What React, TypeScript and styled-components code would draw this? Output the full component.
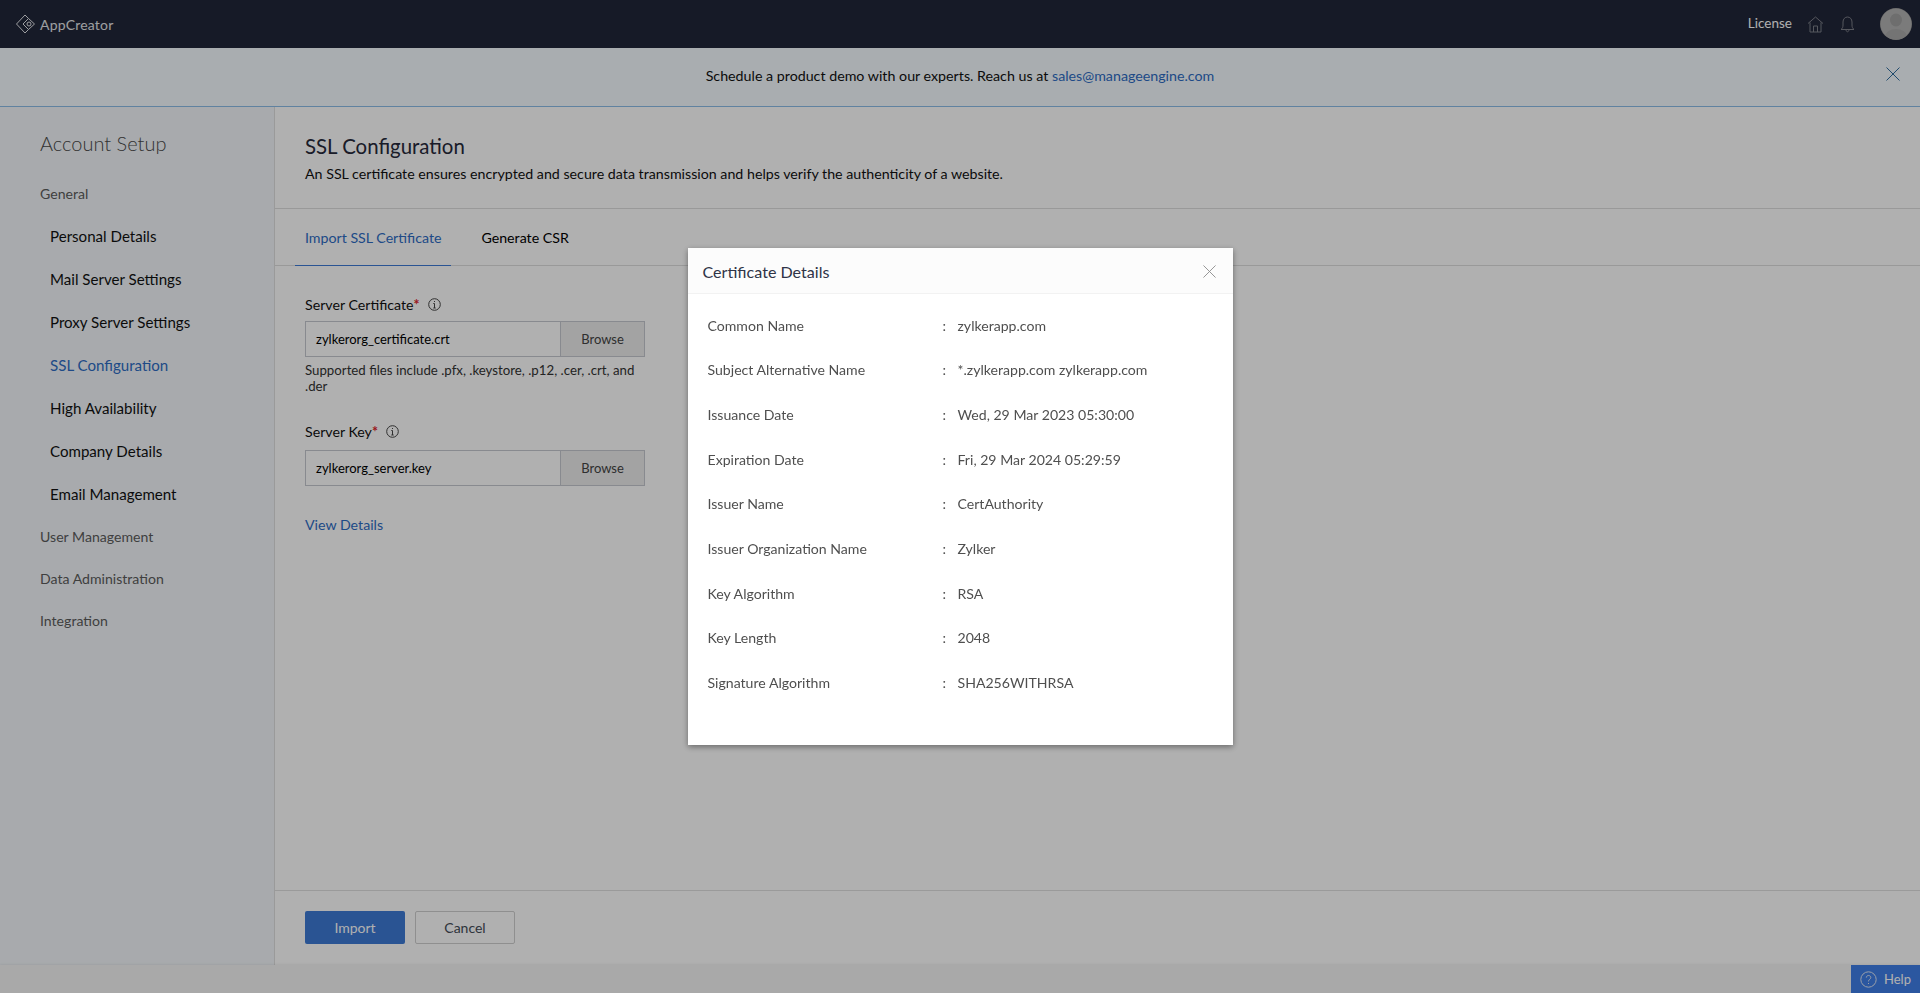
import { styled, createGlobalStyle } from 'styled-components';

const MENU_ITEMS = [
  'Personal Details',
  'Mail Server Settings',
  'Proxy Server Settings',
  'SSL Configuration',
  'High Availability',
  'Company Details',
  'Email Management',
];

const MENU_GROUPS = ['User Management', 'Data Administration', 'Integration'];

const CERT_DETAILS = [
  ['Common Name', 'zylkerapp.com'],
  ['Subject Alternative Name', '*.zylkerapp.com zylkerapp.com'],
  ['Issuance Date', 'Wed, 29 Mar 2023 05:30:00'],
  ['Expiration Date', 'Fri, 29 Mar 2024 05:29:59'],
  ['Issuer Name', 'CertAuthority'],
  ['Issuer Organization Name', 'Zylker'],
  ['Key Algorithm', 'RSA'],
  ['Key Length', '2048'],
  ['Signature Algorithm', 'SHA256WITHRSA'],
];

const GlobalStyle = createGlobalStyle`
  html, body {
    margin: 0;
    padding: 0;
    overflow: hidden;
    font-family: 'Lato', 'Liberation Sans', sans-serif;
  }

  * {
    box-sizing: border-box;
  }
`;

const LogoIcon = () => (
  <svg width="21" height="20" viewBox="0 0 21 20" fill="none" stroke="#e4e6ea" strokeWidth="1">
    <path d="M10 1 L1.5 10 L10 19 L13.5 15.5 L8 10 L13.5 4.5 Z" />
    <path d="M13.5 4.5 L19.5 10 L13.5 15.5" />
    <circle cx="14" cy="10" r="2" />
  </svg>
);

const HomeIcon = () => (
  <svg width="17" height="17" viewBox="0 0 17 17" fill="none" stroke="#7d8089" strokeWidth="1">
    <path d="M1 7.5 L8.5 1 L16 7.5" />
    <path d="M3 6.5 V16 H14 V6.5" />
    <path d="M6.5 16 V10 H10.5 V16" />
  </svg>
);

const BellIcon = () => (
  <svg width="15" height="17" viewBox="0 0 15 17" fill="none" stroke="#7d8089" strokeWidth="1">
    <path d="M1 13.5 C2.5 12.5 3 11 3 9 V6 C3 3 5 1 7.5 1 C10 1 12 3 12 6 V9 C12 11 12.5 12.5 14 13.5 Z" />
    <path d="M6 13.5 C6 16.5 9 16.5 9 13.5" />
  </svg>
);

const CloseIcon = ({ size, color }: { size: number; color: string }) => (
  <svg width={size} height={size} viewBox="0 0 14 14" fill="none" stroke={color} strokeWidth="1">
    <path d="M0.5 0.5 L13.5 13.5 M13.5 0.5 L0.5 13.5" />
  </svg>
);

const InfoIcon = () => (
  <svg width="13" height="13" viewBox="0 0 13 13" fill="none" stroke="#444" strokeWidth="1">
    <circle cx="6.5" cy="6.5" r="5.8" />
    <path d="M6.5 5.5 V10 M5.3 5.5 H6.5 M5.3 10 H7.7" />
    <path d="M6.5 3 V4" />
  </svg>
);

const HelpIcon = () => (
  <svg width="17" height="17" viewBox="0 0 17 17" fill="none" stroke="#dfe6f5" strokeWidth="1">
    <circle cx="8.5" cy="8.5" r="7.7" />
    <path d="M6.3 6.6 C6.3 3.8 10.8 3.9 10.8 6.5 C10.8 8.3 8.5 8.3 8.5 10.4" />
    <path d="M8.5 12 V13" />
  </svg>
);

const AvatarIcon = () => (
  <svg width="32" height="32" viewBox="0 0 32 32">
    <defs>
      <clipPath id="avatar-clip">
        <circle cx="16" cy="16" r="15.5" />
      </clipPath>
    </defs>
    <circle cx="16" cy="16" r="16" fill="#8e8e8e" />
    <g clipPath="url(#avatar-clip)">
      <rect width="32" height="32" fill="#b3b3b3" />
      <ellipse cx="16" cy="12" rx="6" ry="6.5" fill="#a0a0a0" />
      <ellipse cx="16" cy="29" rx="11" ry="8" fill="#a8a8a8" />
    </g>
  </svg>
);

const FileField = ({
  label,
  value,
  helper,
  wideLabel,
}: {
  label: string;
  value: string;
  helper?: string[];
  wideLabel?: boolean;
}) => (
  <S.Field>
    <S.FieldLabel $wide={wideLabel}>
      <span>
        {label}
        <S.Required>*</S.Required>
      </span>
      <InfoIcon />
    </S.FieldLabel>
    <S.FileBox>
      <S.FileName>{value}</S.FileName>
      <S.BrowseButton>Browse</S.BrowseButton>
    </S.FileBox>
    {helper && (
      <S.Helper>
        {helper.map((line) => (
          <div key={line}>{line}</div>
        ))}
      </S.Helper>
    )}
  </S.Field>
);

const App = () => {
  return (
    <S.Page>
      <GlobalStyle />
      <S.TopBar>
        <S.Logo>
          <LogoIcon />
          <span>AppCreator</span>
        </S.Logo>
        <S.TopActions>
          <S.LicenseLink>License</S.LicenseLink>
          <HomeIcon />
          <BellIcon />
          <S.Avatar>
            <AvatarIcon />
          </S.Avatar>
        </S.TopActions>
      </S.TopBar>

      <S.Banner>
        <span>
          Schedule a product demo with our experts. Reach us at <S.BannerLink>sales@manageengine.com</S.BannerLink>
        </span>
        <S.BannerClose>
          <CloseIcon size={14} color="#2f6d9f" />
        </S.BannerClose>
      </S.Banner>

      <S.Body>
        <S.Sidebar>
          <S.SidebarTitle>Account Setup</S.SidebarTitle>
          <S.GroupName>General</S.GroupName>
          {MENU_ITEMS.map((item) => (
            <S.MenuItem key={item} $active={item === 'SSL Configuration'}>
              {item}
            </S.MenuItem>
          ))}
          {MENU_GROUPS.map((group) => (
            <S.GroupName key={group}>{group}</S.GroupName>
          ))}
        </S.Sidebar>

        <S.Main>
          <S.MainHeader>
            <S.PageTitle>SSL Configuration</S.PageTitle>
            <S.PageDescription>
              An SSL certificate ensures encrypted and secure data transmission and helps verify the authenticity of a
              website.
            </S.PageDescription>
          </S.MainHeader>

          <S.Tabs>
            <S.Tab $active>Import SSL Certificate</S.Tab>
            <S.Tab>Generate CSR</S.Tab>
          </S.Tabs>

          <S.Form>
            <FileField
              label="Server Certificate"
              value="zylkerorg_certificate.crt"
              helper={['Supported files include .pfx, .keystore, .p12, .cer, .crt, and', '.der']}
            />
            <FileField label="Server Key" value="zylkerorg_server.key" wideLabel />
            <S.DetailsLink>View Details</S.DetailsLink>
          </S.Form>

          <S.Footer>
            <S.PrimaryButton>Import</S.PrimaryButton>
            <S.SecondaryButton>Cancel</S.SecondaryButton>
          </S.Footer>
        </S.Main>
      </S.Body>

      <S.BottomBar>
        <S.HelpButton>
          <HelpIcon />
          <span>Help</span>
        </S.HelpButton>
      </S.BottomBar>

      <S.Overlay>
        <S.Modal>
          <S.ModalHeader>
            <S.ModalTitle>Certificate Details</S.ModalTitle>
            <CloseIcon size={13} color="#8f8f8f" />
          </S.ModalHeader>
          <S.ModalBody>
            {CERT_DETAILS.map(([name, value]) => (
              <S.DetailRow key={name}>
                <span>{name}</span>
                <span>:</span>
                <span>{value}</span>
              </S.DetailRow>
            ))}
          </S.ModalBody>
        </S.Modal>
      </S.Overlay>
    </S.Page>
  );
};

const S = {
  Page: styled.div`
    display: flex;
    flex-direction: column;

    width: 100%;
    height: 993px;

    background-color: #ffffff;
    color: #000000;
  `,

  TopBar: styled.header`
    display: flex;
    justify-content: space-between;
    align-items: center;

    height: 48px;
    padding: 0 8px 0 15px;

    background-color: #212639;
  `,

  Logo: styled.div`
    display: flex;
    align-items: center;
    gap: 4px;

    color: #e4e6ea;
    font-size: 14px;
    letter-spacing: 0.2px;
  `,

  TopActions: styled.div`
    display: flex;
    align-items: center;
  `,

  LicenseLink: styled.span`
    margin: -2px 15px 0 0;

    color: #ffffff;
    font-size: 13.5px;

    & + svg + svg {
      margin: 0 25px 0 16px;
    }
  `,

  Avatar: styled.div`
    display: flex;

    width: 32px;
    height: 32px;
  `,

  Banner: styled.div`
    position: relative;

    display: flex;
    justify-content: center;
    align-items: center;

    height: 59px;
    padding-bottom: 3px;
    border-bottom: 1px solid #8cbde8;

    background-color: #f5fbff;
    color: #111;
    font-size: 14.24px;
  `,

  BannerLink: styled.span`
    color: #2e6cc4;
  `,

  BannerClose: styled.span`
    position: absolute;
    right: 20px;
    top: 19px;

    display: flex;
  `,

  Body: styled.div`
    display: flex;
    flex: 1;
    min-height: 0;
  `,

  Sidebar: styled.nav`
    display: flex;
    flex-direction: column;

    width: 275px;
    padding: 22px 0 0 40px;
    border-right: 1px solid #e0e0e0;

    background-color: #f3f7fb;
  `,

  SidebarTitle: styled.h1`
    margin: 0 0 15px;

    color: #4a4a4a;
    font-size: 20px;
    font-weight: 300;
    line-height: 28px;
  `,

  GroupName: styled.div`
    display: flex;
    align-items: center;

    height: 42px;

    color: #5c5c5c;
    font-size: 14.1px;
  `,

  MenuItem: styled.div<{ $active?: boolean }>`
    display: flex;
    align-items: center;

    height: 43px;
    padding-left: 10px;

    color: ${({ $active }) => ($active ? '#2e6cc4' : '#111111')};
    font-size: 15.1px;
  `,

  Main: styled.main`
    display: flex;
    flex: 1;
    flex-direction: column;
    min-width: 0;
  `,

  MainHeader: styled.div`
    height: 102px;
    padding: 25px 30px 0;
    border-bottom: 1px solid #dedede;
  `,

  PageTitle: styled.h2`
    margin: 0;

    color: #26293a;
    font-size: 20.4px;
    font-weight: 400;
    line-height: 28px;
  `,

  PageDescription: styled.p`
    margin: 4px 0 0;

    color: #111;
    font-size: 14.22px;
    line-height: 20px;
  `,

  Tabs: styled.div`
    display: flex;

    height: 57px;
    padding-left: 20px;
    border-bottom: 1px solid #dedede;
  `,

  Tab: styled.div<{ $active?: boolean }>`
    display: flex;
    align-items: center;

    height: 57px;
    padding: 0 10px;
    margin-right: 20px;
    border-bottom: 1px solid ${({ $active }) => ($active ? '#3d7ad6' : 'transparent')};

    color: ${({ $active }) => ($active ? '#2e6cc4' : '#000000')};
    font-size: 14.2px;
  `,

  Form: styled.div`
    display: flex;
    flex: 1;
    flex-direction: column;

    padding: 27px 30px 0;
  `,

  Field: styled.div`
    display: flex;
    flex-direction: column;

    width: 340px;
    margin-bottom: 26px;
  `,

  FieldLabel: styled.label<{ $wide?: boolean }>`
    display: flex;
    align-items: center;
    gap: 8px;

    height: 22px;
    margin-bottom: ${({ $wide }) => ($wide ? '8px' : '6px')};

    color: #111;
    font-size: 14.2px;
  `,

  Required: styled.span`
    color: #e0242c;
    font-weight: 700;
  `,

  FileBox: styled.div`
    display: flex;

    height: 36px;
    border: 1px solid #c5c8d0;
  `,

  FileName: styled.div`
    display: flex;
    flex: 1;
    align-items: center;

    padding-left: 10px;

    color: #000;
    font-size: 13px;
  `,

  BrowseButton: styled.div`
    display: flex;
    justify-content: center;
    align-items: center;

    width: 84px;
    border-left: 1px solid #c5c8d0;

    background-color: #ececec;
    color: #444;
    font-size: 13px;
  `,

  Helper: styled.div`
    margin-top: 5px;

    color: #333;
    font-size: 13.25px;
    line-height: 16px;
  `,

  DetailsLink: styled.a`
    margin-top: 3px;

    color: #2e6cc4;
    font-size: 14.2px;
    line-height: 20px;
  `,

  Footer: styled.div`
    display: flex;
    gap: 10px;

    height: 75px;
    padding: 20px 30px 0;
    border-top: 1px solid #e0e0e0;
  `,

  PrimaryButton: styled.button`
    width: 100px;
    height: 33px;
    border: none;
    border-radius: 2px;

    background-color: #3d7ad6;
    color: #ffffff;
    font-family: inherit;
    font-size: 14px;
  `,

  SecondaryButton: styled.button`
    width: 100px;
    height: 33px;
    border: 1px solid #d0d0d0;
    border-radius: 2px;

    background-color: #ffffff;
    color: #444c58;
    font-family: inherit;
    font-size: 14px;
  `,

  BottomBar: styled.div`
    display: flex;
    justify-content: flex-end;

    height: 28px;
    box-shadow: 0 -1px 2px rgba(0, 0, 0, 0.06);

    background-color: #f5f5f5;
  `,

  HelpButton: styled.div`
    display: flex;
    align-items: center;
    gap: 7px;

    width: 69px;
    padding-left: 9px;

    background-color: #3f7fe8;
    color: #ffffff;
    font-size: 13px;
  `,

  Overlay: styled.div`
    position: fixed;
    inset: 0;

    display: flex;
    justify-content: center;
    align-items: flex-start;

    padding-top: 248px;

    background-color: rgba(0, 0, 0, 0.31);
  `,

  Modal: styled.div`
    width: 545px;
    height: 497px;
    box-shadow: 0 2px 6px rgba(0, 0, 0, 0.4);

    background-color: #ffffff;
  `,

  ModalHeader: styled.div`
    display: flex;
    justify-content: space-between;
    align-items: center;

    height: 46px;
    padding: 2px 17px 0 15px;
    border-bottom: 1px solid #f2f2f2;

    background-color: #fcfcfc;
  `,

  ModalTitle: styled.h3`
    margin: 0;

    color: #2f3447;
    font-size: 16.1px;
    font-weight: 400;
  `,

  ModalBody: styled.div`
    padding: 9px 20px 0;
  `,

  DetailRow: styled.div`
    display: grid;
    grid-template-columns: 235px 15px 1fr;
    align-items: center;

    height: 44.67px;

    color: #4f4f4f;
    font-size: 14.1px;
  `,
};

export default App;
